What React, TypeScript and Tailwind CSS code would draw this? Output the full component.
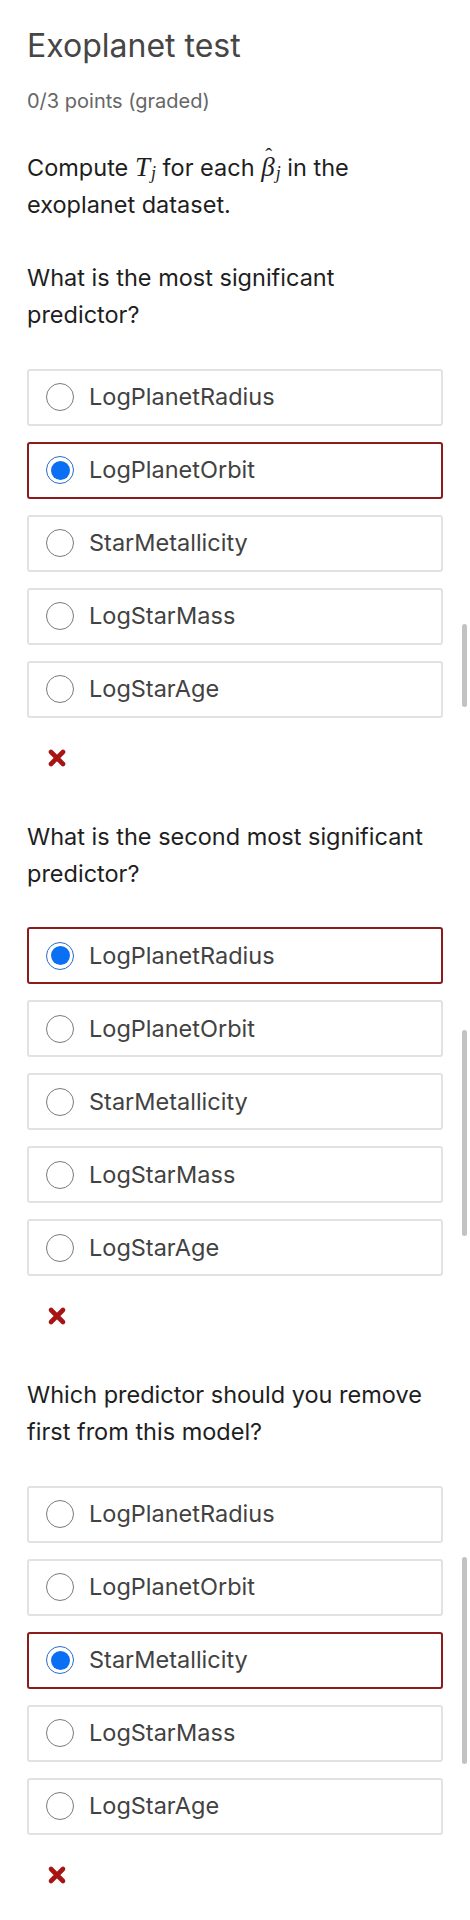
import React from "react";

const OPTIONS = [
  "LogPlanetRadius",
  "LogPlanetOrbit",
  "StarMetallicity",
  "LogStarMass",
  "LogStarAge",
];

interface Question {
  prompt: string;
  selected: number;
  bar: { top: string; height: string };
}

const QUESTIONS: Question[] = [
  {
    prompt: "What is the most significant predictor?",
    selected: 1,
    bar: { top: "top-[255px]", height: "h-[83px]" },
  },
  {
    prompt: "What is the second most significant predictor?",
    selected: 0,
    bar: { top: "top-[103px]", height: "h-[206px]" },
  },
  {
    prompt: "Which predictor should you remove first from this model?",
    selected: 2,
    bar: { top: "top-[71px]", height: "h-[207px]" },
  },
];

function Radio({ checked }: { checked: boolean }) {
  if (checked) {
    return (
      <span className="flex h-[28px] w-[28px] shrink-0 items-center justify-center rounded-full border-[1.5px] border-[#2a6bc9] bg-white">
        <span className="h-[19px] w-[19px] rounded-full bg-[#0b6ff4]" />
      </span>
    );
  }
  return (
    <span className="h-[28px] w-[28px] shrink-0 rounded-full border border-[#7a7a7a] bg-white" />
  );
}

function WrongMark() {
  return (
    <svg width="20" height="20" viewBox="0 0 20 20" className="block">
      <path
        d="M4 4 L16 16 M16 4 L4 16"
        stroke="#a81414"
        strokeWidth="4.6"
        strokeLinecap="round"
      />
    </svg>
  );
}

function Math({ children }: { children: React.ReactNode }) {
  return (
    <span className="font-['Liberation_Serif',serif] italic text-[27px] leading-none">
      {children}
    </span>
  );
}

export default function App() {
  return (
    <div className="min-h-[1920px] bg-white px-[27px] pt-[27px] font-['Inter',sans-serif]">
      <h1 className="text-[32px] font-normal leading-[38px] text-[#464646]">
        Exoplanet test
      </h1>
      <p className="mt-[24px] text-[20px] leading-[24px] text-[#666666]">
        0/3 points (graded)
      </p>

      <p className="mt-[36px] text-[23.5px] leading-[37px] text-[#1e1e1e]">
        Compute{" "}
        <Math>
          T
          <sub className="relative -bottom-[3px] ml-[1px] text-[18px] leading-none">
            j
          </sub>
        </Math>{" "}
        for each{" "}
        <Math>
          <span className="relative inline-block">
            β
            <span className="absolute left-[4px] -top-[8px] not-italic text-[21px]">
              ˆ
            </span>
          </span>
          <sub className="relative -bottom-[3px] ml-[1px] text-[18px] leading-none">
            j
          </sub>
        </Math>{" "}
        in the exoplanet dataset.
      </p>

      {QUESTIONS.map((q, qi) => (
        <section key={qi} className={qi === 0 ? "mt-[36px]" : "mt-[50px]"}>
          <p className="text-[23.5px] leading-[37px] text-[#1e1e1e]">
            {q.prompt}
          </p>

          <div className="relative mt-[35.5px] flex flex-col gap-[16px]">
            {OPTIONS.map((opt, oi) => {
              const checked = oi === q.selected;
              return (
                <label
                  key={opt}
                  className={
                    checked
                      ? "flex h-[57px] items-center gap-[15px] rounded-[3px] border-2 border-[#8a1c1c] pl-[17px]"
                      : "flex h-[57px] items-center gap-[15px] rounded-[3px] border-2 border-[#e2e2e2] pl-[17px]"
                  }
                >
                  <Radio checked={checked} />
                  <span className="text-[23.5px] text-[#424242]">{opt}</span>
                </label>
              );
            })}
            <div
              className={`absolute right-[-24px] w-[5px] rounded-full bg-[#c2c2c2] ${q.bar.top} ${q.bar.height}`}
            />
          </div>

          <div className="mt-[30px] pl-[20px]">
            <WrongMark />
          </div>
        </section>
      ))}
    </div>
  );
}
